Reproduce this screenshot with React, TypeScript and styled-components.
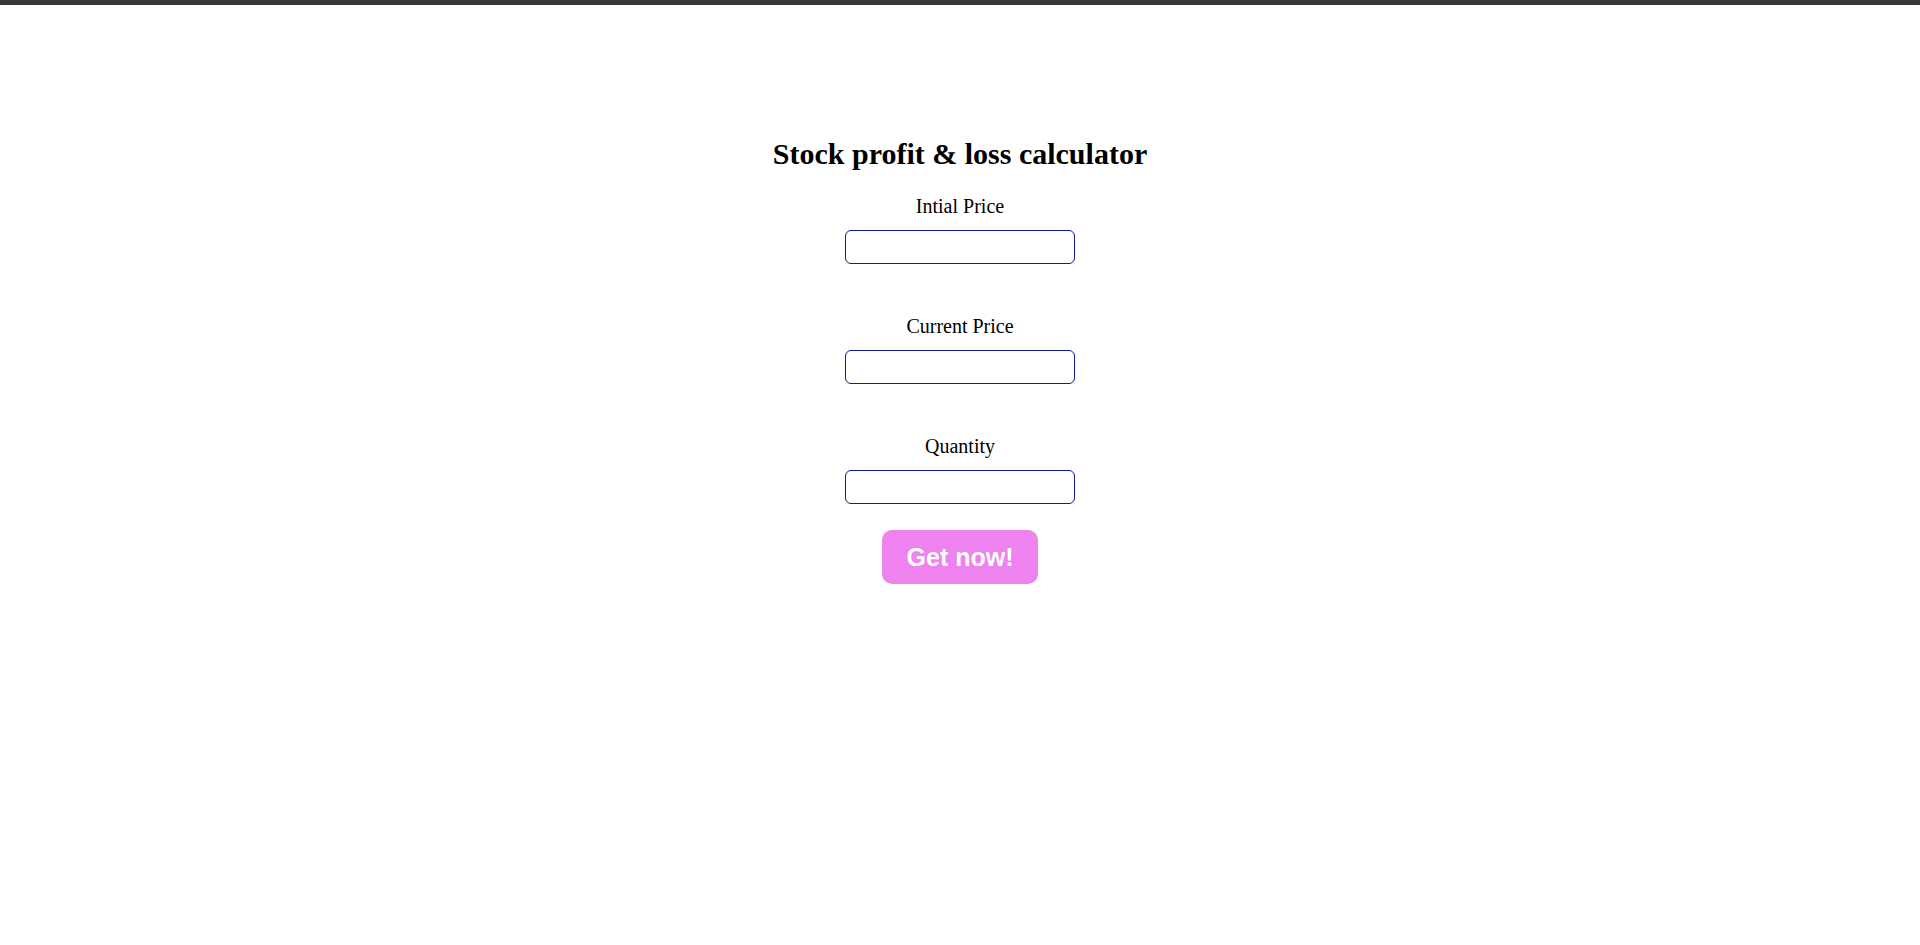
import styled, { createGlobalStyle } from "styled-components";

const GlobalStyle = createGlobalStyle`
  html, body {
    margin: 0;
    padding: 0;
    background: #ffffff;
    font-family: "Liberation Serif", "Times New Roman", serif;
    color: #000000;
  }
`;

const TopBar = styled.div`
  height: 5px;
  background: #38383c;
`;

const Page = styled.div`
  display: flex;
  flex-direction: column;
  align-items: center;
  padding-top: 132px;
`;

const Title = styled.h2`
  margin: 0 0 24px;
  font-size: 30px;
  font-weight: bold;
  line-height: 34px;
`;

const Form = styled.form`
  display: flex;
  flex-direction: column;
  align-items: center;
`;

const Field = styled.div`
  display: flex;
  flex-direction: column;
  align-items: center;
  gap: 12px;
  & + & {
    margin-top: 51px;
  }
`;

const Label = styled.label`
  font-size: 20px;
  line-height: 23px;
`;

const NumberInput = styled.input`
  box-sizing: border-box;
  width: 230px;
  height: 34px;
  border: 1px solid #16169a;
  border-radius: 6px;
  padding: 0 8px;
  font-size: 18px;
  background: #ffffff;
  &:focus {
    outline: none;
  }
`;

const SubmitButton = styled.button`
  margin-top: 26px;
  width: 156px;
  height: 54px;
  border: none;
  border-radius: 10px;
  background: #ee82ee;
  color: #ffffff;
  font-family: "Liberation Sans", Arial, sans-serif;
  font-size: 25px;
  font-weight: bold;
  cursor: pointer;
`;

const fields = [
  { id: "initial", label: "Intial Price" },
  { id: "current", label: "Current Price" },
  { id: "quantity", label: "Quantity" },
];

const App = () => {
  return (
    <>
      <GlobalStyle />
      <TopBar />
      <Page>
        <Title>Stock profit &amp; loss calculator</Title>
        <Form onSubmit={(e) => e.preventDefault()}>
          {fields.map((f) => (
            <Field key={f.id}>
              <Label htmlFor={f.id}>{f.label}</Label>
              <NumberInput id={f.id} type="number" />
            </Field>
          ))}
          <SubmitButton type="submit">Get now!</SubmitButton>
        </Form>
      </Page>
    </>
  );
};

export default App;
